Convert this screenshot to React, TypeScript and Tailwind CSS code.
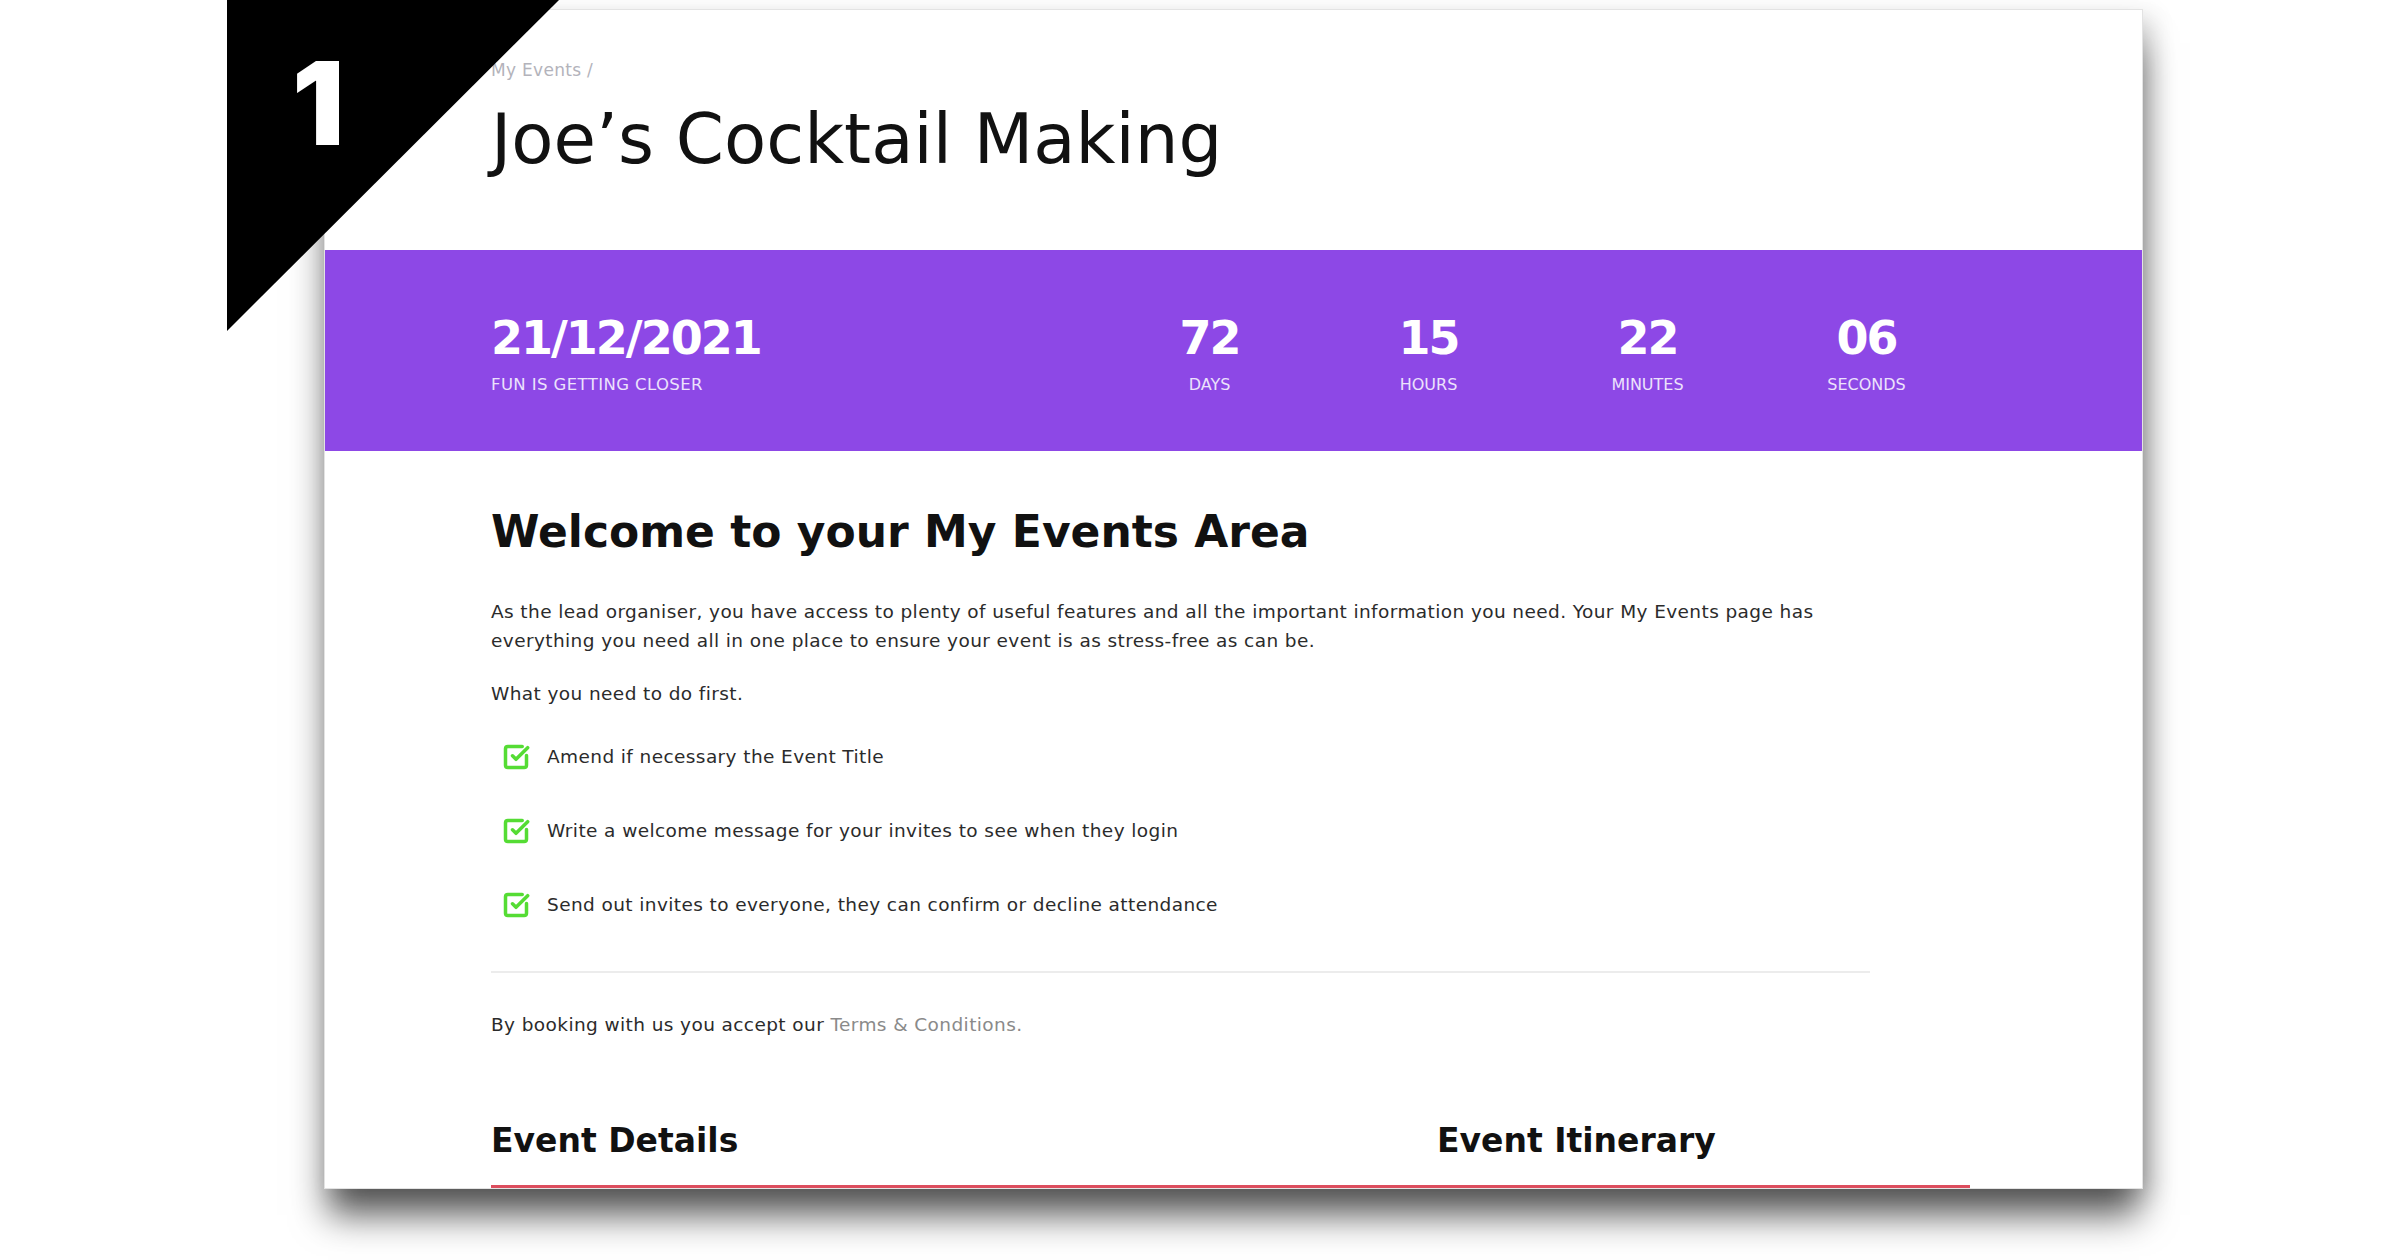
import { SquareCheckBig } from "lucide-react"

const counters = [
  { value: "72", label: "Days" },
  { value: "15", label: "Hours" },
  { value: "22", label: "Minutes" },
  { value: "06", label: "Seconds" },
]

const todos = [
  "Amend if necessary the Event Title",
  "Write a welcome message for your invites to see when they login",
  "Send out invites to everyone, they can confirm or decline attendance",
]

export default function App() {
  return (
    <div className="relative w-[2400px] h-[1260px] overflow-hidden bg-white font-['DejaVu_Sans',sans-serif]">
      <div className="pl-[324px] pt-[9px]">
        <div className="w-[1819px] h-[1180px] overflow-hidden bg-white border border-[#e3e3e3] shadow-[0_30px_34px_-4px_rgba(0,0,0,0.65),10px_6px_22px_rgba(0,0,0,0.12)]">
          <div className="px-[166px] pt-[50px]">
            <p className="text-[17px] leading-[20px] tracking-[0.3px] text-[#b3b3bb]">My Events /</p>
            <h1 className="mt-[19px] text-[69px] leading-[80px] text-[#111]">Joe’s Cocktail Making</h1>
          </div>

          <div className="mt-[71px] h-[201px] bg-[#8d48e6] px-[166px] flex justify-between text-white">
            <div className="pt-[62px]">
              <div className="text-[46px] leading-[52px] font-bold tracking-[-2px]">21/12/2021</div>
              <div className="mt-[11px] text-[16.5px] leading-[20px] tracking-[0.4px] uppercase text-[#ece2fc]">Fun is getting closer</div>
            </div>
            <div className="flex">
              {counters.map((c) => (
                <div key={c.label} className="w-[219px] pt-[62px] text-center">
                  <div className="text-[46px] leading-[52px] font-bold tracking-[-2px]">{c.value}</div>
                  <div className="mt-[11px] text-[16px] leading-[20px] uppercase text-[#ece2fc]">{c.label}</div>
                </div>
              ))}
            </div>
          </div>

          <div className="px-[166px] text-[#2b2b2b] text-[18.5px] tracking-[0.4px]">
            <h2 className="mt-[53px] text-[44px] leading-[56px] tracking-normal font-bold text-[#111]">Welcome to your My Events Area</h2>
            <p className="mt-[37px] leading-[29px]">
              As the lead organiser, you have access to plenty of useful features and all the important information you need. Your My Events page has
              <br />
              everything you need all in one place to ensure your event is as stress-free as can be.
            </p>
            <p className="mt-[24px] leading-[29px]">What you need to do first.</p>

            <ul className="mt-[34px] flex flex-col gap-[45px]">
              {todos.map((t) => (
                <li key={t} className="h-[29px] flex items-center">
                  <SquareCheckBig className="ml-[11px] w-[28px] h-[28px] text-[#55dc34]" strokeWidth={3} />
                  <span className="ml-[17px]">{t}</span>
                </li>
              ))}
            </ul>

            <div className="mt-[52px] h-[2px] w-[1379px] bg-[#ececec]" />

            <p className="mt-[37px] leading-[29px]">
              By booking with us you accept our <a href="#" className="text-[#8a8a8a]">Terms &amp; Conditions.</a>
            </p>

            <div className="mt-[80px] w-[1479px] flex tracking-normal">
              <h3 className="w-[946px] text-[33px] leading-[44px] font-bold text-[#111]">Event Details</h3>
              <h3 className="text-[33px] leading-[44px] font-bold text-[#111]">Event Itinerary</h3>
            </div>
            <div className="mt-[22px] w-[1479px] border-t-[3px] border-[#dc4d5e]" />
          </div>
        </div>
      </div>

      <svg className="absolute left-0 top-0" width="600" height="340" viewBox="0 0 600 340">
        <polygon points="227,0 559,0 227,331" fill="#000" />
      </svg>
      <span className="absolute left-[292px] top-[45px] text-[116px] leading-none font-black text-white font-['Inter',sans-serif]">1</span>
    </div>
  )
}
